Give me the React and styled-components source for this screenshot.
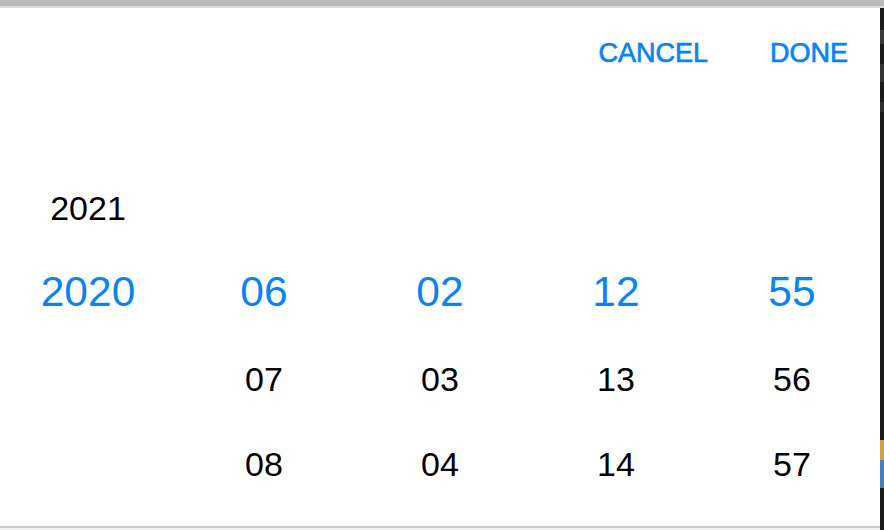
import React from "react";
import styled, { createGlobalStyle } from "styled-components";

const GlobalStyle = createGlobalStyle`
  html, body { margin: 0; padding: 0; background: #ffffff; }
  body { font-family: "Liberation Sans", Arial, sans-serif; }
`;

const Page = styled.div`
  width: 884px;
  height: 530px;
  display: flex;
  flex-direction: column;
  overflow: hidden;
`;

const TopBar = styled.div`
  height: 6px;
  background: #bbbbbb;
  border-bottom: 2px solid #dcdcdc;
  flex: none;
`;

const Body = styled.div`
  flex: 1;
  display: flex;
`;

const Panel = styled.div`
  width: 880px;
  display: flex;
  flex-direction: column;
  background: #ffffff;
`;

const Strip = styled.div`
  width: 4px;
  background: #1b1b1b;
  display: flex;
  flex-direction: column;
`;

const StripMark = styled.div`
  height: ${(p) => p.h}px;
  margin-top: ${(p) => p.top}px;
  background: ${(p) => p.c};
`;

const Header = styled.div`
  height: 70px;
  box-sizing: border-box;
  padding: 30px 32px 10px;
  display: flex;
  justify-content: flex-end;
  gap: 62px;
`;

const ActionButton = styled.button`
  border: 0;
  background: none;
  padding: 0;
  margin: 0;
  font-family: "Liberation Sans", Arial, sans-serif;
  font-weight: 400;
  font-size: 27px;
  line-height: 30px;
  height: 30px;
  color: #0a84f5;
  -webkit-text-stroke: 0.7px #0a84f5;
  cursor: pointer;
`;

const Picker = styled.div`
  flex: 1;
  padding-top: 91px;
  display: grid;
  grid-template-columns: repeat(5, 1fr);
`;

const Column = styled.div`
  display: flex;
  flex-direction: column;
  align-items: center;
`;

const Item = styled.div`
  width: 100%;
  text-align: center;
  font-family: "Liberation Sans", Arial, sans-serif;
  height: ${(p) => (p.$selected ? 90 : p.$above ? 78 : 85)}px;
  line-height: ${(p) => (p.$selected ? 90 : p.$above ? 78 : 85)}px;
  font-size: ${(p) => (p.$selected ? 42.5 : 34)}px;
  color: ${(p) => (p.$selected ? "#0a84f5" : "#000000")};
`;

const BottomLine = styled.div`
  height: 2px;
  background: #c9c9c9;
  border-bottom: 2px solid #f2f2f2;
  flex: none;
`;

const columns = [
  { above: "2021", selected: "2020", below: [] },
  { above: "", selected: "06", below: ["07", "08"] },
  { above: "", selected: "02", below: ["03", "04"] },
  { above: "", selected: "12", below: ["13", "14"] },
  { above: "", selected: "55", below: ["56", "57"] },
];

export default function App() {
  return (
    <>
      <GlobalStyle />
      <Page>
        <TopBar />
        <Body>
          <Panel>
            <Header>
              <ActionButton>CANCEL</ActionButton>
              <ActionButton>DONE</ActionButton>
            </Header>
            <Picker>
              {columns.map((col, i) => (
                <Column key={i}>
                  <Item $above>{col.above}</Item>
                  <Item $selected>{col.selected}</Item>
                  {col.below.map((v) => (
                    <Item key={v}>{v}</Item>
                  ))}
                </Column>
              ))}
            </Picker>
            <BottomLine />
          </Panel>
          <Strip>
            <StripMark top={22} h={14} c="#3a3a3a" />
            <StripMark top={20} h={18} c="#333333" />
            <StripMark top={20} h={10} c="#2e2e2e" />
            <StripMark top={328} h={20} c="#c9a24a" />
            <StripMark top={0} h={28} c="#4a7fb5" />
          </Strip>
        </Body>
      </Page>
    </>
  );
}
